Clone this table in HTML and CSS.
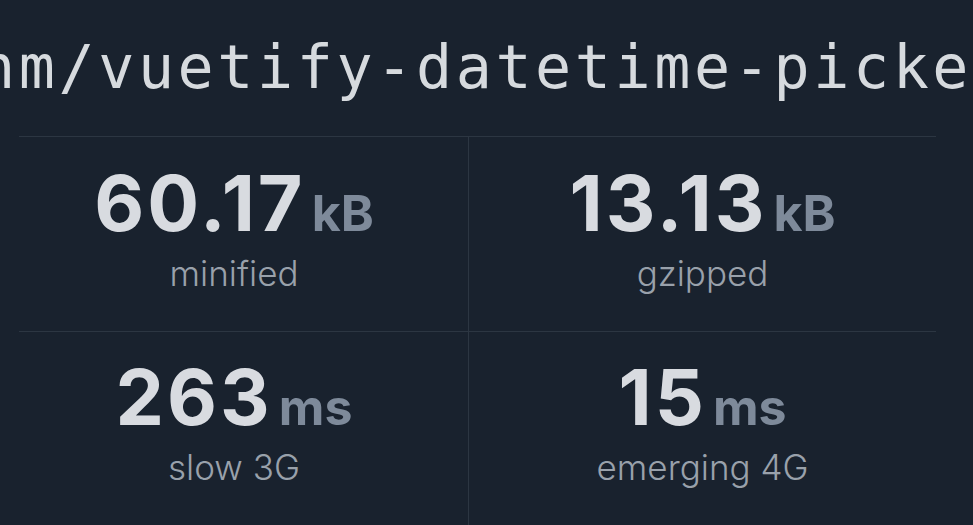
FILE: index.html
```html
<!DOCTYPE html>
<html lang="en">
<head>
<meta charset="utf-8">
<title>vuetify-datetime-picker</title>
<link rel="stylesheet" href="styles.css">
</head>
<body>
<div class="page">
  <h1 class="title">nm/vuetify-datetime-picker</h1>
  <div class="stats">
    <div class="cell left">
      <div class="value"><span class="num">60.17</span><span class="unit">kB</span></div>
      <div class="label">minified</div>
    </div>
    <div class="cell right">
      <div class="value"><span class="num">13.13</span><span class="unit">kB</span></div>
      <div class="label">gzipped</div>
    </div>
    <div class="cell left last">
      <div class="value"><span class="num">263</span><span class="unit">ms</span></div>
      <div class="label">slow 3G</div>
    </div>
    <div class="cell right last">
      <div class="value"><span class="num">15</span><span class="unit">ms</span></div>
      <div class="label">emerging 4G</div>
    </div>
  </div>
</div>
</body>
</html>
```

FILE: styles.css
```css
html, body {
  margin: 0;
  padding: 0;
  background: #19222e;
  overflow: hidden;
}

.page {
  width: 973px;
  height: 525px;
  overflow: hidden;
}

.title {
  margin: 0 0 0 -21px;
  padding-top: 37px;
  height: 136px;
  box-sizing: border-box;
  font-family: "DejaVu Sans Mono", monospace;
  font-weight: normal;
  font-size: 60px;
  letter-spacing: 3.6px;
  line-height: 1;
  color: #d6dade;
  white-space: nowrap;
}

.stats {
  display: grid;
  grid-template-columns: 449px 468px;
  margin-left: 19px;
}

.cell {
  border-top: 1px solid #2c3642;
  height: 195px;
  box-sizing: border-box;
  padding-top: 28px;
  display: flex;
  flex-direction: column;
  align-items: center;
  font-family: Inter, "Noto Sans", sans-serif;
}

.cell.last {
  height: 200px;
  padding-top: 27px;
}

.cell.left {
  padding-right: 19px;
}

.cell.right {
  border-left: 1px solid #2c3642;
}

.value {
  display: flex;
  align-items: baseline;
  gap: 6px;
  line-height: 1;
}

.num {
  font-size: 77px;
  font-weight: 700;
  color: #d8dbe0;
  letter-spacing: 3px;
}

.unit {
  font-size: 50px;
  font-weight: 700;
  color: #7e8a9a;
}

.label {
  margin-top: 14px;
  font-size: 35px;
  font-weight: 300;
  line-height: 1;
  color: #99a1ab;
}
```
